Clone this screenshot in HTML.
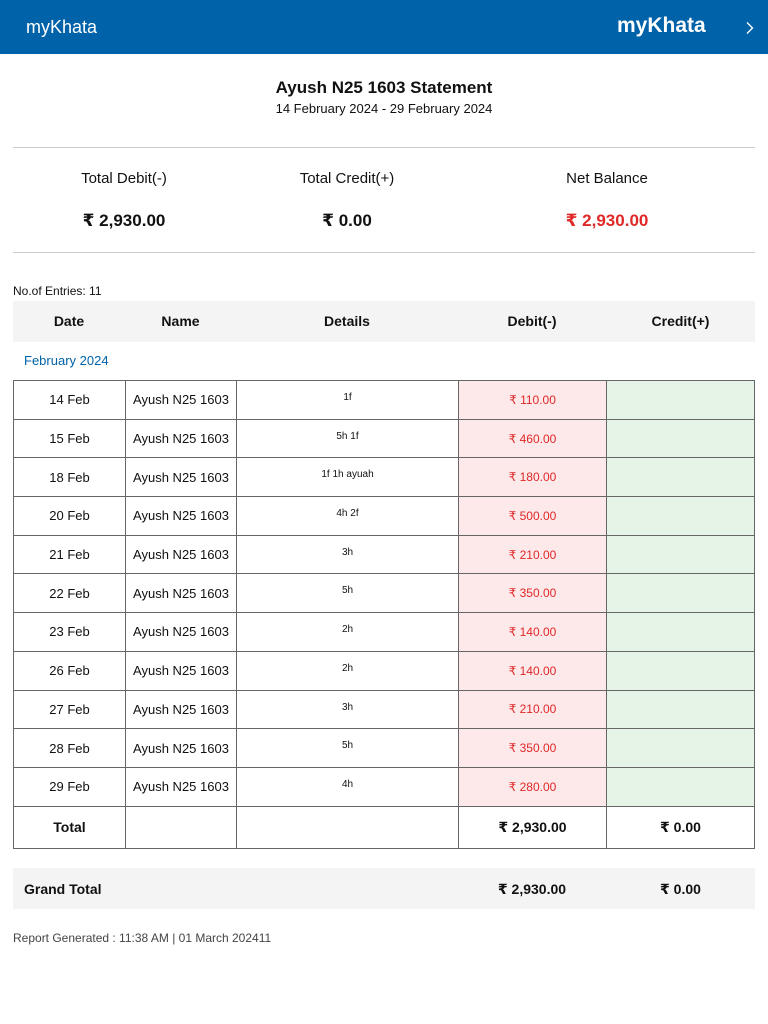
<!DOCTYPE html>
<html><head><meta charset="utf-8"><style>
*{margin:0;padding:0;box-sizing:border-box}
body{width:768px;height:1024px;background:#fff;font-family:"Liberation Sans","DejaVu Sans",sans-serif;color:#111;position:relative;overflow:hidden}
.hdr{position:absolute;left:0;top:0;width:768px;height:54px;background:#0062a8;color:#fff}
.abs{position:absolute}
.c{text-align:center}
table{position:absolute;left:13px;top:380px;width:741px;border-collapse:collapse;table-layout:fixed}
td{border:1px solid #666;text-align:center;font-size:13px;height:38.7px;padding:0}
td.d{font-size:10px;vertical-align:top;padding-top:11px}
td.r{background:#fde8ea;color:#e02828;font-size:12px}
td.g{background:#e6f4e7}
tr.t td{height:42.5px;font-weight:bold;font-size:14px}
</style></head><body>
<div class="hdr">
<div class="abs" style="left:26px;top:17px;font-size:18px">myKhata</div>
<div class="abs" style="left:617px;top:14px;font-size:21px;font-weight:bold">myKhata</div>
<svg class="abs" style="left:745px;top:21px" width="10" height="14" viewBox="0 0 10 14"><path d="M2 1.5 L7.5 7 L2 12.5" fill="none" stroke="#fff" stroke-width="1.4"/></svg>
</div>
<div class="abs c" style="left:0;width:768px;top:78px;font-size:17px;font-weight:bold">Ayush N25 1603 Statement</div>
<div class="abs c" style="left:0;width:768px;top:101px;font-size:13px">14 February 2024 - 29 February 2024</div>
<div class="abs" style="left:13px;top:147px;width:742px;height:1px;background:#ccc"></div>
<div class="abs c" style="left:24px;width:200px;top:170px;font-size:15px">Total Debit(-)</div>
<div class="abs c" style="left:247px;width:200px;top:170px;font-size:15px">Total Credit(+)</div>
<div class="abs c" style="left:507px;width:200px;top:170px;font-size:15px">Net Balance</div>
<div class="abs c" style="left:24px;width:200px;top:211px;font-size:17px;font-weight:bold">₹ 2,930.00</div>
<div class="abs c" style="left:247px;width:200px;top:211px;font-size:17px;font-weight:bold">₹ 0.00</div>
<div class="abs c" style="left:507px;width:200px;top:211px;font-size:17px;font-weight:bold;color:#e02828">₹ 2,930.00</div>
<div class="abs" style="left:13px;top:252px;width:742px;height:1px;background:#ccc"></div>
<div class="abs" style="left:13px;top:284px;font-size:12px">No.of Entries: 11</div>
<div class="abs" style="left:13px;top:301px;width:742px;height:41px;background:#f4f4f4;font-size:14px;font-weight:bold">
<div class="abs c" style="left:0;width:112px;top:12px">Date</div>
<div class="abs c" style="left:112px;width:111px;top:12px">Name</div>
<div class="abs c" style="left:223px;width:222px;top:12px">Details</div>
<div class="abs c" style="left:445px;width:148px;top:12px">Debit(-)</div>
<div class="abs c" style="left:593px;width:149px;top:12px">Credit(+)</div>
</div>
<div class="abs" style="left:24px;top:353px;font-size:13px;color:#0062a8">February 2024</div>
<table>
<colgroup><col style="width:112px"><col style="width:111px"><col style="width:222px"><col style="width:148px"><col style="width:148px"></colgroup>
<tr><td>14 Feb</td><td>Ayush N25 1603</td><td class="d">1f</td><td class="r">₹ 110.00</td><td class="g"></td></tr>
<tr><td>15 Feb</td><td>Ayush N25 1603</td><td class="d">5h 1f</td><td class="r">₹ 460.00</td><td class="g"></td></tr>
<tr><td>18 Feb</td><td>Ayush N25 1603</td><td class="d">1f 1h ayuah</td><td class="r">₹ 180.00</td><td class="g"></td></tr>
<tr><td>20 Feb</td><td>Ayush N25 1603</td><td class="d">4h 2f</td><td class="r">₹ 500.00</td><td class="g"></td></tr>
<tr><td>21 Feb</td><td>Ayush N25 1603</td><td class="d">3h</td><td class="r">₹ 210.00</td><td class="g"></td></tr>
<tr><td>22 Feb</td><td>Ayush N25 1603</td><td class="d">5h</td><td class="r">₹ 350.00</td><td class="g"></td></tr>
<tr><td>23 Feb</td><td>Ayush N25 1603</td><td class="d">2h</td><td class="r">₹ 140.00</td><td class="g"></td></tr>
<tr><td>26 Feb</td><td>Ayush N25 1603</td><td class="d">2h</td><td class="r">₹ 140.00</td><td class="g"></td></tr>
<tr><td>27 Feb</td><td>Ayush N25 1603</td><td class="d">3h</td><td class="r">₹ 210.00</td><td class="g"></td></tr>
<tr><td>28 Feb</td><td>Ayush N25 1603</td><td class="d">5h</td><td class="r">₹ 350.00</td><td class="g"></td></tr>
<tr><td>29 Feb</td><td>Ayush N25 1603</td><td class="d">4h</td><td class="r">₹ 280.00</td><td class="g"></td></tr>
<tr class="t"><td>Total</td><td></td><td></td><td>₹ 2,930.00</td><td>₹ 0.00</td></tr>
</table>
<div class="abs" style="left:13px;top:868px;width:742px;height:41px;background:#f4f4f4;font-size:14px;font-weight:bold">
<div class="abs" style="left:11px;top:13px">Grand Total</div>
<div class="abs c" style="left:445px;width:148px;top:13px">₹ 2,930.00</div>
<div class="abs c" style="left:593px;width:149px;top:13px">₹ 0.00</div>
</div>
<div class="abs" style="left:13px;top:931px;font-size:12px;color:#444">Report Generated : 11:38 AM | 01 March 202411</div>
</body></html>
